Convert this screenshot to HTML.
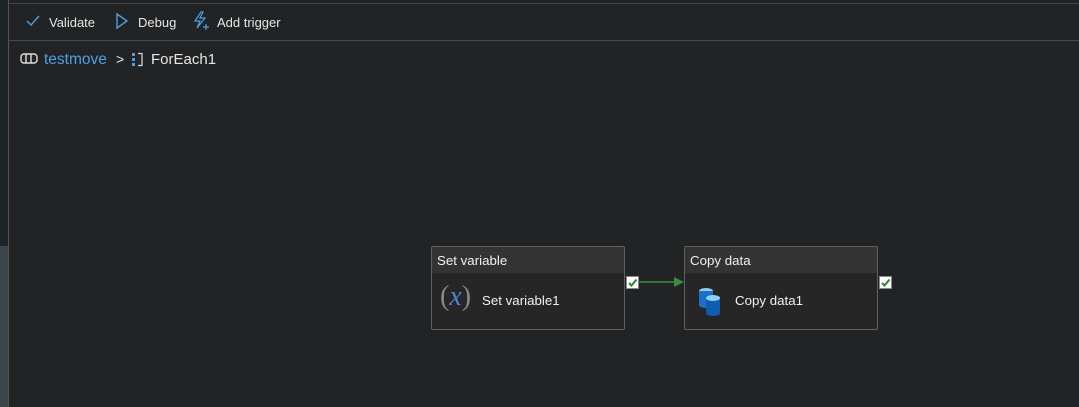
<html><head><style>
body{margin:0;width:1079px;height:407px;background:#222324;font-family:"Liberation Sans",sans-serif;position:relative;overflow:hidden;color:#e6e6e6}
.a{position:absolute}
.node{position:absolute;width:192px;height:82px;border:1px solid #606060;background:#262626;border-radius:2px}
.node .h{height:26px;background:#333;font-size:13.3px;line-height:27px;padding-left:5px;color:#f0f0f0}
.node .b{font-size:13.3px;color:#f0f0f0}
.ck{position:absolute;width:11px;height:11px;background:#fff;border:1px solid #888}
</style></head><body>
<div class="a" style="left:0;top:0;width:8px;height:246px;background:#1d2426"></div>
<div class="a" style="left:0;top:246px;width:8px;height:161px;background:#3b4448"></div>
<div class="a" style="left:8px;top:0;width:1px;height:407px;background:#555"></div>
<div class="a" style="left:9px;top:3px;width:1070px;height:1px;background:#444"></div>
<div class="a" style="left:9px;top:40px;width:1070px;height:1px;background:#4a4a4a"></div>
<svg class="a" style="left:25px;top:14px" width="16" height="14"><path d="M2 7 L6 11 L14 2" stroke="#4aa0e6" stroke-width="1.4" fill="none"/></svg>
<div class="a" style="left:49px;top:15px;font-size:13px">Validate</div>
<svg class="a" style="left:115px;top:12px" width="14" height="18"><path d="M2 2 L12 9 L2 16 Z" stroke="#4aa0e6" stroke-width="1.4" fill="none"/></svg>
<div class="a" style="left:138px;top:15px;font-size:13px">Debug</div>
<svg class="a" style="left:193px;top:11px" width="18" height="20"><path d="M8 1 L2 10 L7 10 L4 17 L12 7 L7 7 L10 1 Z" stroke="#4aa0e6" stroke-width="1.2" fill="none"/><path d="M13 13 V19 M10 16 H16" stroke="#4aa0e6" stroke-width="1.2"/></svg>
<div class="a" style="left:217px;top:15px;font-size:13px">Add trigger</div>
<svg class="a" style="left:20px;top:53px" width="18" height="12"><rect x="1" y="1" width="16" height="9" rx="3" stroke="#ddd" stroke-width="1.4" fill="none"/><path d="M6 1V10M11 1V10" stroke="#ddd" stroke-width="1.4"/></svg>
<div class="a" style="left:44px;top:51px;font-size:15.5px;color:#4aa0e6">testmove</div>
<div class="a" style="left:116px;top:51px;font-size:14px">&gt;</div>
<svg class="a" style="left:131px;top:52px" width="14" height="15"><rect x="1" y="1" width="3" height="3" fill="#4aa0e6"/><rect x="1" y="6" width="3" height="3" fill="#4aa0e6"/><rect x="1" y="11" width="3" height="3" fill="#4aa0e6"/><path d="M7 1.5 H11 V13.5 H7" stroke="#ddd" stroke-width="1.2" fill="none"/></svg>
<div class="a" style="left:151px;top:51px;font-size:15px">ForEach1</div>
<div class="node" style="left:431px;top:246px"><div class="h">Set variable</div>
<div class="a" style="left:8px;top:34px;font-family:'Liberation Serif',serif;font-size:28px;color:#888">(<span style="color:#4a86d0;font-style:italic">x</span>)</div>
<div class="a b" style="left:50px;top:46px">Set variable1</div></div>
<div class="ck" style="left:626px;top:276px"><svg width="11" height="11" style="display:block"><path d="M2 6 L4.5 8.5 L9.5 2.5" stroke="#1f8a2e" stroke-width="2" fill="none"/></svg></div>
<svg class="a" style="left:638px;top:276px" width="48" height="12"><path d="M0 6 H38" stroke="#3e8a3e" stroke-width="1.5"/><path d="M36 1 L46 6 L36 11 Z" fill="#3e8a3e"/></svg>
<div class="node" style="left:684px;top:246px"><div class="h">Copy data</div>
<svg class="a" style="left:12px;top:40px" width="28" height="30"><ellipse cx="9" cy="4" rx="7" ry="3" fill="#8ad0f5"/><rect x="2" y="4" width="14" height="14" fill="#1c6fc8"/><ellipse cx="9" cy="18" rx="7" ry="3" fill="#1c6fc8"/><rect x="9" y="11" width="14" height="15" fill="#0f5db0"/><ellipse cx="16" cy="26" rx="7" ry="3" fill="#0f5db0"/><ellipse cx="16" cy="11" rx="7" ry="3" fill="#8ad0f5"/></svg>
<div class="a b" style="left:50px;top:46px">Copy data1</div></div>
<div class="ck" style="left:879px;top:276px"><svg width="11" height="11" style="display:block"><path d="M2 6 L4.5 8.5 L9.5 2.5" stroke="#1f8a2e" stroke-width="2" fill="none"/></svg></div>
</body></html>
